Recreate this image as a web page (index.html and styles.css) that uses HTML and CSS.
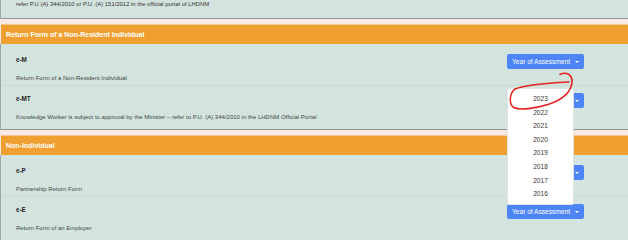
FILE: index.html
```html
<!DOCTYPE html>
<html lang="en">
<head>
<meta charset="utf-8">
<title>Return Forms</title>
<link rel="stylesheet" href="styles.css">
</head>
<body>
<div class="page">
  <section class="card card-top">
    <div class="card-body">
      <p class="note">refer P.U (A) 344/2010 or P.U. (A) 151/2012 in the official portal of LHDNM</p>
    </div>
  </section>

  <section class="card">
    <h2 class="card-head">Return Form of a Non-Resident Individual</h2>
    <div class="card-body">
      <div class="row">
        <div class="info">
          <div class="code">e-M</div>
          <div class="desc">Return Form of a Non-Resident Individual</div>
        </div>
        <div class="dropdown">
          <button class="btn">Year of Assessment <span class="caret"></span></button>
        </div>
      </div>
      <div class="row">
        <div class="info">
          <div class="code">e-MT</div>
          <div class="desc">Knowledge Worker is subject to approval by the Minister – refer to P.U. (A) 344/2010 in the LHDNM Official Portal</div>
        </div>
        <div class="dropdown">
          <button class="btn">Year of Assessment <span class="caret"></span></button>
          <ul class="menu">
            <li>2023</li>
            <li>2022</li>
            <li>2021</li>
            <li>2020</li>
            <li>2019</li>
            <li>2018</li>
            <li>2017</li>
            <li>2016</li>
          </ul>
        </div>
      </div>
    </div>
  </section>

  <section class="card">
    <h2 class="card-head">Non-Individual</h2>
    <div class="card-body">
      <div class="row">
        <div class="info">
          <div class="code">e-P</div>
          <div class="desc">Partnership Return Form</div>
        </div>
        <div class="dropdown">
          <button class="btn">Year of Assessment <span class="caret"></span></button>
        </div>
      </div>
      <div class="row">
        <div class="info">
          <div class="code">e-E</div>
          <div class="desc">Return Form of an Employer</div>
        </div>
        <div class="dropdown">
          <button class="btn">Year of Assessment <span class="caret"></span></button>
        </div>
      </div>
    </div>
  </section>

  <svg class="annotation" width="628" height="240" viewBox="0 0 628 240" aria-hidden="true">
    <path d="M560,74.5 C566,71.5 572.5,74.5 572,82 C571.5,92 562,100 548,104.5 C535,108.5 520,110.5 513.5,107.5 C508.5,103.5 509.5,93 515,89 C525,85 550,83 569,82" fill="none" stroke="#e2231f" stroke-width="1.6" stroke-linecap="round" stroke-linejoin="round"/>
  </svg>
</div>
</body>
</html>
```

FILE: styles.css
```css
html, body {
  margin: 0;
  padding: 0;
}

body {
  background: #f8e9e6;
  font-family: "Liberation Sans", Arial, sans-serif;
  color: #222;
  overflow: hidden;
}

.page {
  position: relative;
  width: 628px;
  height: 240px;
  overflow: hidden;
}

.card {
  margin-bottom: 5px;
}

.card-head {
  margin: 0 0 0 1px;
  height: 19px;
  line-height: 19px;
  padding: 0 5px;
  border-top: 1px solid #f5c996;
  background: #f0a030;
  color: #fff;
  font-size: 7px;
  font-weight: bold;
}

.card-body {
  background: #d3e4df;
  border-left: 1px solid #9ea7a3;
  border-bottom: 1px solid #8e9792;
  padding: 3px 0 5px;
}

.card-top .card-body {
  padding: 0 0 9px;
}

.note {
  margin: 0;
  padding-left: 15px;
  line-height: 9px;
  font-size: 5.9px;
  color: #333;
}

.row {
  display: flex;
  justify-content: space-between;
  align-items: flex-start;
  padding: 7px 44px 3px 15px;
}

.row + .row {
  border-top: 1px solid #c9dbd6;
}

.code {
  line-height: 11px;
  font-size: 6.3px;
  font-weight: bold;
  color: #1e1e1e;
}

.desc {
  margin-top: 9px;
  line-height: 8px;
  font-size: 6px;
  color: #444;
}

.dropdown {
  position: relative;
}

.btn {
  display: flex;
  align-items: center;
  justify-content: space-between;
  box-sizing: border-box;
  width: 77px;
  height: 15px;
  padding: 0 5px;
  margin: 0;
  border: none;
  border-radius: 2px;
  background: #4d85f6;
  color: #fff;
  font-family: "Liberation Sans", Arial, sans-serif;
  font-size: 6.6px;
  white-space: nowrap;
}

.caret {
  width: 0;
  height: 0;
  border-top: 2.5px solid #fff;
  border-left: 2.5px solid transparent;
  border-right: 2.5px solid transparent;
}

.menu {
  position: absolute;
  top: -5px;
  left: 0;
  z-index: 10;
  box-sizing: border-box;
  width: 67px;
  margin: 0;
  padding: 3px 0;
  list-style: none;
  background: #fff;
  border: 1px solid #dfe3e2;
  border-radius: 2px;
}

.menu li {
  height: 13.6px;
  line-height: 13.6px;
  text-align: center;
  font-size: 6.6px;
  color: #333;
}

.annotation {
  position: absolute;
  left: 0;
  top: 0;
  z-index: 20;
  pointer-events: none;
}
```
